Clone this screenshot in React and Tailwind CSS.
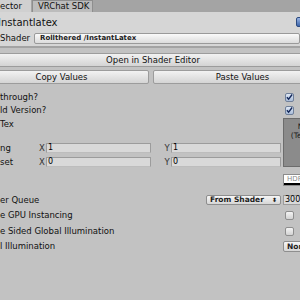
const font = { fontFamily: '"DejaVu Sans", Verdana, sans-serif' }

function Check({ on }) {
  return (
    <div
      className={`w-[9px] h-[9px] rounded-[2px] border flex items-center justify-center ${
        on ? 'border-[#6f7f99] bg-gradient-to-b from-[#dfe8f5] to-[#a9bcd8]' : 'border-[#8e8e8e] bg-gradient-to-b from-[#f4f4f4] to-[#d2d2d2]'
      }`}
    >
      {on && (
        <svg width="8" height="8" viewBox="0 0 8 8">
          <path d="M1 4.2 L3 6.4 L7 1.2" fill="none" stroke="#13275a" strokeWidth="1.6" />
        </svg>
      )}
    </div>
  )
}

function Field({ label, value, wide }) {
  return (
    <div className="flex items-center h-[10px]">
      <span className="w-[8px] text-center text-[#333]">{label}</span>
      <div className={`${wide} h-[10px] bg-[#d9d9d9] border border-[#9c9c9c] border-b-[#bdbdbd] pl-[1px] leading-[8px] text-[8px] text-black`}>
        {value}
      </div>
    </div>
  )
}

function Label({ children, className = '' }) {
  return <span className={`pl-[26px] whitespace-nowrap text-[#111] ${className}`}>{children}</span>
}

export default function App() {
  return (
    <div className="w-[300px] h-[300px] overflow-hidden bg-[#c2c2c2] text-[8.5px] leading-none" style={font}>
      {/* tabs */}
      <div className="h-[12px] bg-[#a4a4a4] flex items-end">
        <div className="w-[31px] h-[12px] bg-[#d0d0d0] flex items-center text-[#111]">ector</div>
        <div className="ml-[1px] w-[61px] h-[12px] bg-[#bcbcbc] border border-b-0 border-[#8e8e8e] flex items-center pl-[5px] text-[#111]">
          VRChat SDK
        </div>
      </div>

      {/* header */}
      <div className="h-[36px] bg-[#d6d6d6] border-b-2 border-[#a3a3a3] relative">
        <div className="pt-[6px] text-[10px] leading-[10px] text-[#111] -ml-[2px]">Instantlatex</div>
        <div className="absolute right-[-4px] top-[5px] w-[8px] h-[10px] rounded-[2px] bg-gradient-to-b from-[#9ab6e4] to-[#3c64a8] border border-[#2b4a80]" />
        <div className="mt-[5px] flex items-center h-[11px]">
          <span className="w-[34px] text-[#111]">Shader</span>
          <div className="flex-1 h-[11px] rounded-[2px] border border-[#9a9a9a] bg-gradient-to-b from-[#fafafa] to-[#dcdcdc] pl-[5px] flex items-center text-[7px] font-bold text-[#222]">
            Rollthered /InstantLatex
          </div>
        </div>
      </div>

      {/* body */}
      <div className="-ml-[26px] w-[358px]">
        <div className="mt-[5px] h-[14px] rounded-[2px] border border-[#9c9c9c] bg-gradient-to-b from-[#f2f2f2] to-[#d4d4d4] flex items-center justify-center text-[#111]">
          Open in Shader Editor
        </div>
        <div className="mt-[3px] flex gap-[4px]">
          <div className="w-[175px] h-[14px] rounded-[2px] border border-[#9c9c9c] bg-gradient-to-b from-[#f2f2f2] to-[#d4d4d4] flex items-center justify-center text-[#111]">
            Copy Values
          </div>
          <div className="flex-1 h-[14px] rounded-[2px] border border-[#9c9c9c] bg-gradient-to-b from-[#f2f2f2] to-[#d4d4d4] flex items-center justify-center text-[#111]">
            Paste Values
          </div>
        </div>

        <div className="mt-[8px] flex items-center h-[10px]">
          <Label className="flex-1">through?</Label>
          <div className="w-[49px] pl-[2px]"><Check on /></div>
        </div>
        <div className="mt-[3px] flex items-center h-[10px]">
          <Label className="flex-1">ld Version?</Label>
          <div className="w-[49px] pl-[2px]"><Check on /></div>
        </div>

        <div className="mt-[3px] flex">
          <div className="flex-1 flex flex-col">
            <div className="h-[13px] flex items-center"><Label>Tex</Label></div>
            <div className="mt-[12px] flex items-center h-[10px]">
              <Label className="w-[64px]">ng</Label>
              <Field label="X" value="1" wide="w-[105px]" />
              <div className="w-[12px]" />
              <Field label="Y" value="1" wide="w-[110px]" />
            </div>
            <div className="mt-[4px] flex items-center h-[10px]">
              <Label className="w-[64px]">set</Label>
              <Field label="X" value="0" wide="w-[105px]" />
              <div className="w-[12px]" />
              <Field label="Y" value="0" wide="w-[110px]" />
            </div>
          </div>
          <div className="w-[49px] h-[49px] bg-[#8b8b8b] border border-[#6c6c6c] flex flex-col items-center pt-[3px] text-[7.5px] leading-[9px] text-[#1a1a1a]">
            <span>None</span>
            <span>(Texture)</span>
          </div>
        </div>

        <div className="mt-[7px] flex justify-end">
          <div className="w-[49px] h-[12px] border border-[#8c8c8c] bg-white flex flex-col">
            <div className="flex-1 pl-[3px] text-[7px] leading-[8px] text-[#8a8a8a]">HDR</div>
            <div className="h-[2px] bg-black" />
          </div>
        </div>

        <div className="mt-[9px] flex items-center h-[10px]">
          <Label className="flex-1">er Queue</Label>
          <div className="w-[75px] h-[10px] mr-[2px] rounded-[2px] border border-[#8e8e8e] bg-gradient-to-b from-[#f6f6f6] to-[#d6d6d6] flex items-center justify-between px-[3px] text-[7.5px] font-bold text-[#222]">
            <span>From Shader</span>
            <span className="text-[6px]">⬍</span>
          </div>
          <div className="w-[49px] h-[10px] bg-[#d9d9d9] border border-[#9c9c9c] pl-[1px] text-[8px] leading-[8px]">3000</div>
        </div>

        <div className="mt-[5px] flex items-center h-[10px]">
          <Label className="flex-1">e GPU Instancing</Label>
          <div className="w-[49px] pl-[2px]"><Check /></div>
        </div>
        <div className="mt-[6px] flex items-center h-[10px]">
          <Label className="flex-1">e Sided Global Illumination</Label>
          <div className="w-[49px] pl-[2px]"><Check /></div>
        </div>
        <div className="mt-[5px] flex items-center h-[11px]">
          <Label className="flex-1">l Illumination</Label>
          <div className="w-[49px] h-[11px] rounded-[2px] border border-[#8e8e8e] bg-gradient-to-b from-[#f6f6f6] to-[#d6d6d6] flex items-center pl-[3px] text-[7.5px] font-bold text-[#222]">
            None
          </div>
        </div>
      </div>
    </div>
  )
}
